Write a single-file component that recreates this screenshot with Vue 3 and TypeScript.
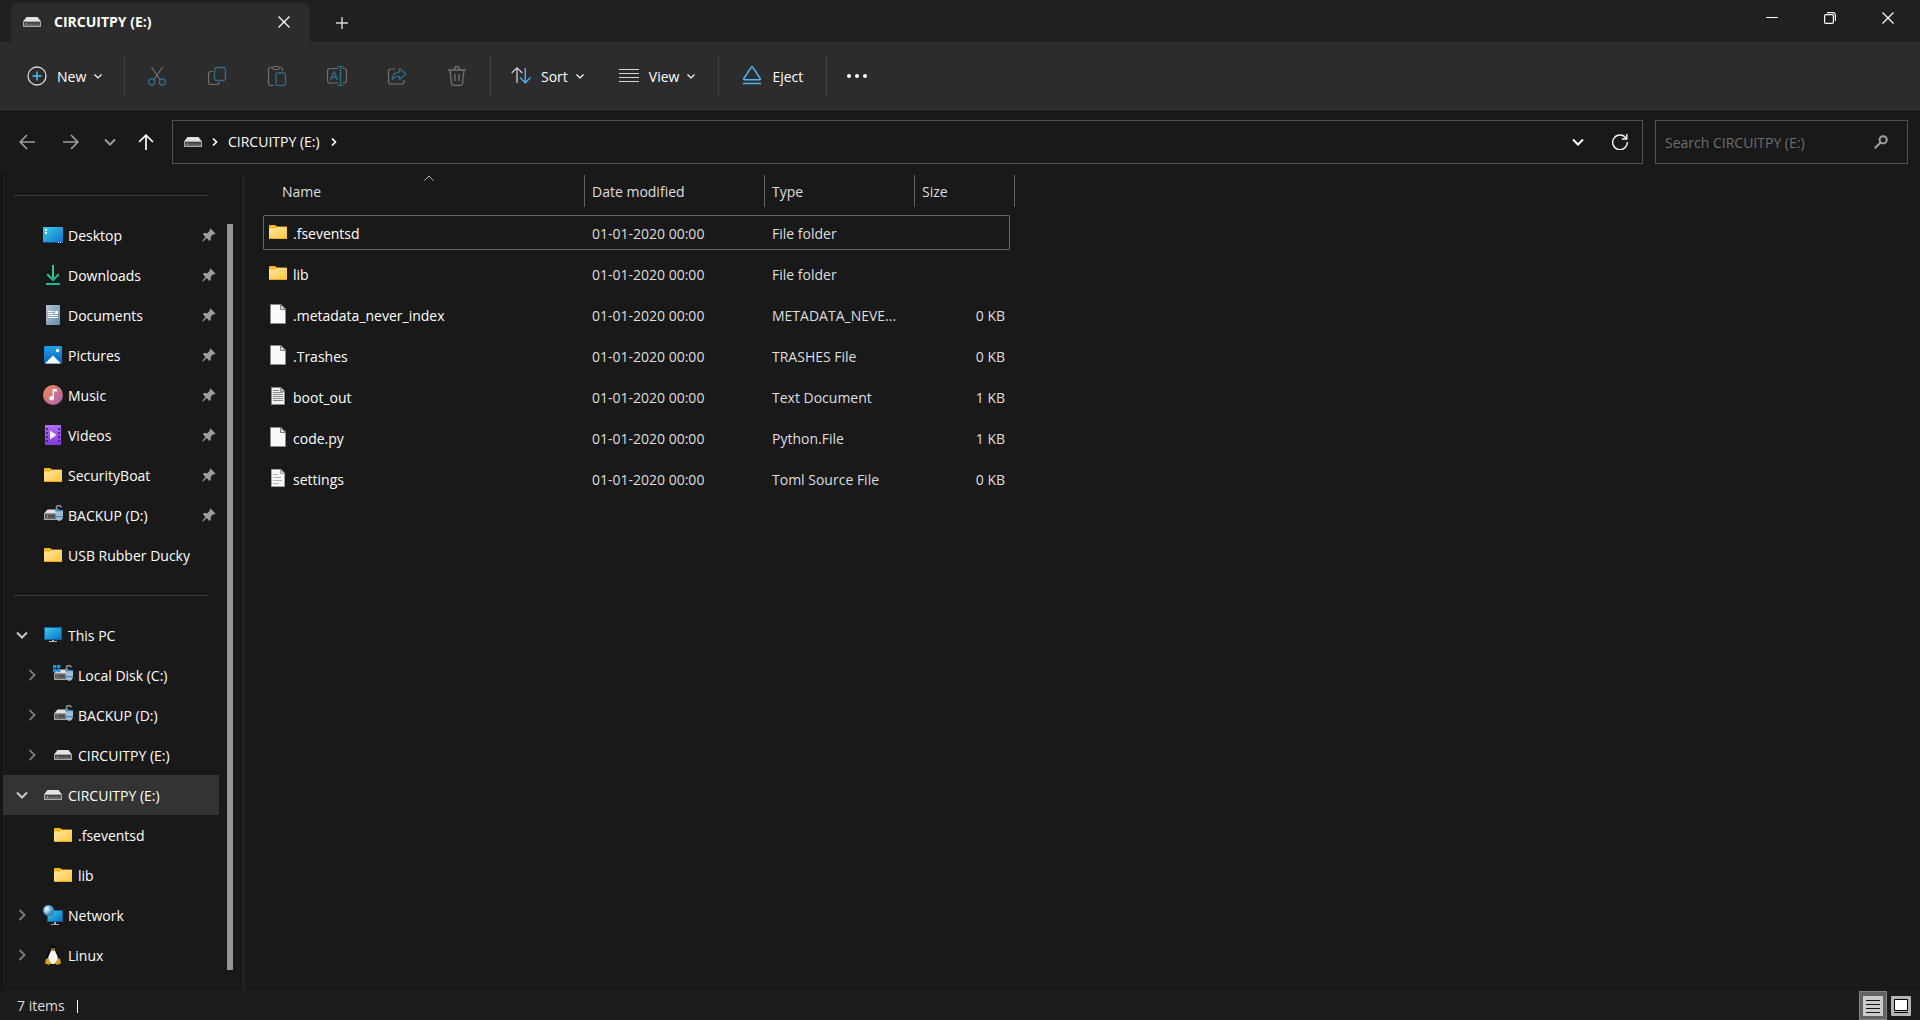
<script setup lang="ts">
import { ref } from 'vue'

interface TreeItem {
  label: string
  icon: string
  level: number
  pinned?: boolean
  expander?: 'open' | 'closed'
  selected?: boolean
}

interface FileRow {
  name: string
  icon: string
  modified: string
  type: string
  size: string
}

const quickAccess: TreeItem[] = [
  { label: 'Desktop', icon: 'desktop', level: 0, pinned: true },
  { label: 'Downloads', icon: 'downloads', level: 0, pinned: true },
  { label: 'Documents', icon: 'documents', level: 0, pinned: true },
  { label: 'Pictures', icon: 'pictures', level: 0, pinned: true },
  { label: 'Music', icon: 'music', level: 0, pinned: true },
  { label: 'Videos', icon: 'videos', level: 0, pinned: true },
  { label: 'SecurityBoat', icon: 'folder', level: 0, pinned: true },
  { label: 'BACKUP (D:)', icon: 'drive-lock', level: 0, pinned: true },
  { label: 'USB Rubber Ducky', icon: 'folder', level: 0 },
]

const devices: TreeItem[] = [
  { label: 'This PC', icon: 'pc', level: 0, expander: 'open' },
  { label: 'Local Disk (C:)', icon: 'drive-system', level: 1, expander: 'closed' },
  { label: 'BACKUP (D:)', icon: 'drive-lock', level: 1, expander: 'closed' },
  { label: 'CIRCUITPY (E:)', icon: 'drive', level: 1, expander: 'closed' },
  { label: 'CIRCUITPY (E:)', icon: 'drive', level: 0, expander: 'open', selected: true },
  { label: '.fseventsd', icon: 'folder', level: 1 },
  { label: 'lib', icon: 'folder', level: 1 },
  { label: 'Network', icon: 'network', level: 0, expander: 'closed' },
  { label: 'Linux', icon: 'linux', level: 0, expander: 'closed' },
]

const groups = [quickAccess, devices]

const fileActions = [
  { label: 'Cut', icon: 'cut' },
  { label: 'Copy', icon: 'copy' },
  { label: 'Paste', icon: 'paste' },
  { label: 'Rename', icon: 'rename' },
  { label: 'Share', icon: 'share' },
  { label: 'Delete', icon: 'trash' },
]

const stamp = '01-01-2020 00:00'
const files: FileRow[] = [
  { name: '.fseventsd', icon: 'folder', modified: stamp, type: 'File folder', size: '' },
  { name: 'lib', icon: 'folder', modified: stamp, type: 'File folder', size: '' },
  { name: '.metadata_never_index', icon: 'page', modified: stamp, type: 'METADATA_NEVE...', size: '0 KB' },
  { name: '.Trashes', icon: 'page', modified: stamp, type: 'TRASHES File', size: '0 KB' },
  { name: 'boot_out', icon: 'text', modified: stamp, type: 'Text Document', size: '1 KB' },
  { name: 'code.py', icon: 'page', modified: stamp, type: 'Python.File', size: '1 KB' },
  { name: 'settings', icon: 'toml', modified: stamp, type: 'Toml Source File', size: '0 KB' },
]

const focused = ref(0)
const query = ref('')
</script>

<template>
  <div class="explorer">
    <svg class="sprite" aria-hidden="true">
      <defs>
        <linearGradient id="g-blue" x1="0" y1="0" x2="1" y2="1">
          <stop offset="0" stop-color="#38cfe8" /><stop offset="1" stop-color="#0f6fc9" />
        </linearGradient>
        <linearGradient id="g-folder" x1="0" y1="0" x2="1" y2="1">
          <stop offset="0" stop-color="#ffe9a3" /><stop offset="1" stop-color="#fbc53a" />
        </linearGradient>
        <linearGradient id="g-down" x1="0" y1="0" x2="1" y2="1">
          <stop offset="0" stop-color="#30cc8c" /><stop offset="1" stop-color="#16a3a0" />
        </linearGradient>
        <linearGradient id="g-doc" x1="0" y1="0" x2="1" y2="1">
          <stop offset="0" stop-color="#b4c6da" /><stop offset="1" stop-color="#668aac" />
        </linearGradient>
        <linearGradient id="g-pic" x1="0" y1="0" x2="0" y2="1">
          <stop offset="0" stop-color="#1da0ea" /><stop offset="1" stop-color="#0a62b8" />
        </linearGradient>
        <linearGradient id="g-music" x1="0" y1="0" x2="1" y2="1">
          <stop offset="0" stop-color="#f58a52" /><stop offset="1" stop-color="#a763b4" />
        </linearGradient>
        <linearGradient id="g-video" x1="0" y1="0" x2="0" y2="1">
          <stop offset="0" stop-color="#b070f2" /><stop offset="1" stop-color="#8338dd" />
        </linearGradient>
        <radialGradient id="g-globe" cx="0.4" cy="0.35" r="0.7">
          <stop offset="0" stop-color="#cbe9f8" /><stop offset="0.5" stop-color="#5aa9d6" /><stop offset="1" stop-color="#2a6fa2" />
        </radialGradient>
        <linearGradient id="g-drive" x1="0" y1="0" x2="0" y2="1">
          <stop offset="0" stop-color="#3c3c3c" /><stop offset="1" stop-color="#707070" />
        </linearGradient>
      </defs>

      <symbol id="drive" viewBox="0 0 20 20">
        <path d="M4.500 5h11L19 9.500H1z" fill="#e2e2e4" />
        <path d="M1 9h18v6H1z" fill="#a9a9a9" />
        <path d="M2 10h16v4H2z" fill="url(#g-drive)" />
        <path d="M4 11h1v2H4z" fill="#35e04a" />
      </symbol>
      <symbol id="drive-lock" viewBox="0 0 20 20">
        <path d="M4.500 4.500h11L19 8.500H1z" fill="#e2e2e4" />
        <path d="M1 8.500h18V15H1z" fill="#a9a9a9" />
        <path d="M2 9.500h16V14H2z" fill="url(#g-drive)" />
        <path d="M4 10.500h1v2H4z" fill="#35e04a" />
        <path d="M13.500 5V2.500a2 2 0 0 1 2-2h.5a2 2 0 0 1 2 2" fill="none" stroke="#8d98a3" stroke-width="1.500" />
        <path d="M12.500 5H20v7.500q-1 3-3.750 3.500-2.750-.5-3.750-3.500z" fill="#a9bccb" />
        <path d="M12 5h8v1.300h-8zM12 11h8v1.300h-8z" fill="#2b8fdc" />
      </symbol>
      <symbol id="drive-system" viewBox="0 0 20 20">
        <use href="#drive-lock" />
        <path d="M0 0h3.300v3.300H0zM4 0h3.300v3.300H4zM0 4h3.300v3.300H0zM4 4h3.300v3.300H4z" fill="#1b95e8" />
      </symbol>
      <symbol id="folder" viewBox="0 0 20 20">
        <path d="M1 4q0-1 1-1h5l2 1.500h9q1 0 1 1V16H1z" fill="#f9b71c" />
        <path d="M1 6.500h6L9 5h10v11q0 1-1 1H2q-1 0-1-1z" fill="url(#g-folder)" />
        <path d="M1 16h18q0 1-1 1H2q-1 0-1-1z" fill="#eba92b" />
      </symbol>
      <symbol id="desktop" viewBox="0 0 20 20">
        <rect y="2" width="20" height="16" rx="1" fill="url(#g-blue)" />
        <path d="M0 17h20q0 1-1 1H1q-1 0-1-1z" fill="#0b4f8d" />
        <path d="M2 4h2v2H2zM2 7h2v2H2zM15 17h1v1h-1zM17 17h1v1h-1z" fill="#fff" />
      </symbol>
      <symbol id="downloads" viewBox="0 0 20 20">
        <path d="M9 0h2v13H9z" fill="#30cc8c" />
        <path d="M4.200 9.200 10 15l5.800-5.800" fill="none" stroke="url(#g-down)" stroke-width="2" />
        <path d="M3 18h14v2H3z" fill="url(#g-down)" />
      </symbol>
      <symbol id="documents" viewBox="0 0 20 20">
        <rect x="3" width="14" height="20" rx="1" fill="url(#g-doc)" />
        <path d="M5 6h6v1H5zM5 8h6v1H5zM5 10h10v1H5zM5 12h10v1H5zM12 6h3v3h-3z" fill="#fff" />
      </symbol>
      <symbol id="pictures" viewBox="0 0 20 20">
        <rect x="1" y="1" width="18" height="18" rx="1.500" fill="url(#g-pic)" />
        <path d="M2.500 18 10 10.500 17.500 18q-.5.500-1.500.5H4q-1 0-1.500-.5z" fill="#f3f8fd" />
        <circle cx="14.500" cy="5.500" r="1.700" fill="#fff" />
      </symbol>
      <symbol id="music" viewBox="0 0 20 20">
        <circle cx="10" cy="10" r="10" fill="url(#g-music)" />
        <circle cx="8.700" cy="13.200" r="2.300" fill="#fff" />
        <path d="M9.600 4h4.200v2.600h-2.800v6.600H9.600z" fill="#fff" />
      </symbol>
      <symbol id="videos" viewBox="0 0 20 20">
        <rect x="2" width="16" height="20" rx="1" fill="url(#g-video)" />
        <path d="M3 3h2v2H3zM3 7h2v2H3zM3 11h2v2H3zM3 15h2v2H3zM15 3h2v2h-2zM15 7h2v2h-2zM15 11h2v2h-2zM15 15h2v2h-2z" fill="#4b2284" />
        <path d="M7 5.500v9l6.500-4.500z" fill="#f5effc" />
      </symbol>
      <symbol id="pc" viewBox="0 0 20 20">
        <rect x="1" y="2" width="18" height="13" fill="#15609a" />
        <rect x="2" y="3" width="16" height="11" fill="url(#g-blue)" />
        <path d="M9 15h2v1h3v1H6v-1h3z" fill="#b0b8be" />
      </symbol>
      <symbol id="network" viewBox="0 0 20 20">
        <rect x="4" y="5" width="16" height="12" rx=".5" fill="#15609a" />
        <rect x="5" y="6" width="14" height="10" fill="url(#g-blue)" />
        <path d="M11 17h2v2h3v1H8v-1h3z" fill="#a5adb3" />
        <circle cx="5.500" cy="5.500" r="5.500" fill="url(#g-globe)" />
        <path d="M2 2.500q3-1.500 4 .5T4.500 6 6 9q-3 0-4.500-3z" fill="#e8f5fb" fill-opacity=".7" />
      </symbol>
      <symbol id="linux" viewBox="0 0 20 20">
        <path d="M10 0c2.200 0 3 1.500 3 3.500 0 2 3.500 5 4 9.500l-3 6H6l-3-6c.5-4.500 4-7.500 4-9.500C7 1.500 7.800 0 10 0z" fill="#0a0a0a" />
        <path d="M8 5.500q2-1 4 0c.5 2.500 2.800 4.500 2.800 8 0 3-2 5.500-4.800 5.500s-4.800-2.500-4.800-5.500c0-3.500 2.300-5.500 2.800-8z" fill="#fafafa" />
        <path d="M8 4.500h4L10 7z" fill="#e8a50c" />
        <path d="M8.300 3h1v1.200h-1zM10.700 3h1v1.200h-1z" fill="#ddd" />
        <path d="M4.500 13 8 18q-.5 2-2.500 1.800L2 18.500 3 14zM15.500 13 12 18q.5 2 2.500 1.800l3.500-1.300-1-4.500z" fill="#d9a014" />
      </symbol>
      <symbol id="page" viewBox="0 0 20 20">
        <path d="M2.500.500H13l4.500 4.500v14.500h-15z" fill="#fafafa" stroke="#8a8a8a" />
        <path d="M12.500.500V5.500h5z" fill="#dedede" stroke="#7c7c7c" />
      </symbol>
      <symbol id="text" viewBox="0 0 20 20">
        <path d="M3.500 1.500h9.500l3.500 3.500v13.500h-13z" fill="#f2f2f2" stroke="#8a8a8a" />
        <path d="M5 4h6v1H5zM5 6h10v1H5zM5 8h10v1H5zM5 10h10v1H5zM5 12h10v1H5zM5 14h10v1H5z" fill="#8c8c8c" />
        <path d="M12.500 1.500v4h4z" fill="#d5d5d5" stroke="#8a8a8a" />
      </symbol>
      <symbol id="toml" viewBox="0 0 20 20">
        <path d="M3.500 1.500h9.500l3.500 3.500v13.500h-13z" fill="#f7f7f7" stroke="#a5a5a5" />
        <path d="M5 6h5v1H5zM5 9h8v1H5zM5 12h9v1H5zM5 15h6v1H5z" fill="#b4b4b4" />
        <path d="M12.500 1.500v4h4z" fill="#e5e5e5" stroke="#9a9a9a" />
      </symbol>

      <symbol id="cut" viewBox="0 0 20 20">
        <path d="M4.500 1 12.800 13.500M15.500 1 7.200 13.500" fill="none" stroke="#717171" stroke-width="1.200" />
        <g fill="none" stroke="#316a8b" stroke-width="1.400"><circle cx="4.700" cy="16" r="3" /><circle cx="15.300" cy="16" r="3" /></g>
      </symbol>
      <symbol id="copy" viewBox="0 0 20 20">
        <path d="M5.500 5.500H4A2.500 2.500 0 0 0 1.500 8v8A2.500 2.500 0 0 0 4 18.500h5.500a2.500 2.500 0 0 0 2.500-2.500" fill="none" stroke="#717171" stroke-width="1.200" />
        <rect x="7.500" y="1.500" width="11" height="13" rx="2.500" fill="none" stroke="#316a8b" stroke-width="1.300" />
      </symbol>
      <symbol id="paste" viewBox="0 0 20 20">
        <path d="M6.500 19.500h-3a2 2 0 0 1-2-2v-14a2 2 0 0 1 2-2H6M12 1.500h1.500a2 2 0 0 1 2 2V5" fill="none" stroke="#717171" stroke-width="1.200" />
        <rect x="5.500" y=".5" width="7" height="3" rx="1.500" fill="none" stroke="#717171" />
        <rect x="9" y="7" width="9.500" height="12.500" rx="1.500" fill="none" stroke="#316a8b" stroke-width="1.300" />
      </symbol>
      <symbol id="rename" viewBox="0 0 20 20">
        <path d="M11 2.500H3A2.500 2.500 0 0 0 .5 5v9.500A2.500 2.500 0 0 0 3 17h8M15.500 2.500H17A2.500 2.500 0 0 1 19.500 5v9.500A2.500 2.500 0 0 1 17 17h-1.500" fill="none" stroke="#717171" stroke-width="1.200" />
        <path d="M3.500 14 7 5.500l3.500 8.500M4.700 11.200h4.600M10.500.5h6M10.500 19.500h6M13.500.5v19" fill="none" stroke="#316a8b" stroke-width="1.400" />
      </symbol>
      <symbol id="share" viewBox="0 0 20 20">
        <path d="M8 3H4a2.500 2.500 0 0 0-2.500 2.500v10A2.500 2.500 0 0 0 4 18h10.500a2.500 2.500 0 0 0 2.500-2.500V14" fill="none" stroke="#717171" stroke-width="1.200" />
        <path d="M12.500 2.500 19 8l-6.500 5.500v-3.200c-3.500 0-5.500 1-7.500 3.200.5-4.500 3-7.300 7.500-7.700z" fill="none" stroke="#316a8b" stroke-width="1.300" stroke-linejoin="round" />
      </symbol>
      <symbol id="trash" viewBox="0 0 20 20">
        <path d="M1 4h18M7.500 4V3a2.500 2.500 0 0 1 5 0v1M3 4l1.500 13.500a2 2 0 0 0 2 1.800h7a2 2 0 0 0 2-1.800L17 4M8 8v7M12 8v7" fill="none" stroke="#717171" stroke-width="1.300" />
      </symbol>

      <symbol id="down" viewBox="0 0 12 12"><path d="m1 3.500 5 5 5-5" fill="none" stroke="currentColor" stroke-width="2" /></symbol>
      <symbol id="down-thin" viewBox="0 0 8 8"><path d="m.5 2.500 3.500 3.500 3.500-3.500" fill="none" stroke="currentColor" stroke-width="1.200" /></symbol>
      <symbol id="right" viewBox="0 0 12 12"><path d="m3.500 1 5 5-5 5" fill="none" stroke="currentColor" stroke-width="2" /></symbol>
      <symbol id="pin" viewBox="0 0 14 14">
        <path d="M8.500.5 13.500 5.500 12 6.500 11 6.300 8.700 8.700l.2 3L7.500 13 4.600 10.100 1.200 13.500.3 12.800 3.500 9 .8 6.300 2.200 5l3 .2L7.700 2.900 7.500 1.800z" fill="#98a0a6" />
      </symbol>
      <symbol id="close" viewBox="0 0 12 12"><path d="m.5.500 11 11M11.500.500l-11 11" fill="none" stroke="currentColor" stroke-width="1.300" /></symbol>
    </svg>

    <header class="titlebar">
      <div class="tab">
        <svg class="icon"><use href="#drive" /></svg>
        <span class="tab-title">CIRCUITPY (E:)</span>
        <button class="plain" type="button" aria-label="Close tab"><svg class="glyph"><use href="#close" /></svg></button>
      </div>
      <button class="plain add-tab" type="button" aria-label="New tab">
        <svg class="glyph" viewBox="0 0 12 12"><path d="M6 0v12M0 6h12" stroke="#d8d8d8" stroke-width="1.400" /></svg>
      </button>
      <div class="window-controls">
        <button class="plain" type="button" aria-label="Minimize">
          <svg class="glyph" viewBox="0 0 12 12"><path d="M0 5h12v1H0z" fill="#fff" /></svg>
        </button>
        <button class="plain" type="button" aria-label="Restore">
          <svg class="glyph" viewBox="0 0 12 12">
            <rect x=".6" y="2.600" width="8.800" height="8.800" rx="1.200" fill="none" stroke="#fff" stroke-width="1.200" />
            <path d="M3 .6h6a2.400 2.400 0 0 1 2.400 2.400v6" fill="none" stroke="#fff" stroke-width="1.200" />
          </svg>
        </button>
        <button class="plain" type="button" aria-label="Close"><svg class="glyph"><use href="#close" /></svg></button>
      </div>
    </header>

    <div class="toolbar" role="toolbar" aria-label="Commands">
      <div class="tool-group group-new">
        <button class="command" type="button">
          <svg class="icon" viewBox="0 0 20 20">
            <circle cx="10" cy="10" r="9" fill="none" stroke="#d9d9d9" stroke-width="1.300" />
            <path d="M10 5.500v9M5.500 10h9" stroke="#4cc2ff" stroke-width="1.400" />
          </svg>
          <span class="label">New</span>
          <svg class="caret"><use href="#down-thin" /></svg>
        </button>
      </div>
      <div class="tool-group group-actions">
        <button v-for="a in fileActions" :key="a.icon" class="plain" type="button" :aria-label="a.label" disabled>
          <svg class="icon"><use :href="`#${a.icon}`" /></svg>
        </button>
      </div>
      <div class="tool-group group-view">
        <button class="command" type="button">
          <svg class="icon" viewBox="0 0 20 20">
            <path d="M.7 7 6 1.800 11.300 7M6 2v15" fill="none" stroke="#cfcfcf" stroke-width="1.300" />
            <path d="M9 11.500l5.300 5.200 5.300-5.200M14.300 16.500V2" fill="none" stroke="#4cb4ee" stroke-width="1.400" />
          </svg>
          <span class="label">Sort</span>
          <svg class="caret"><use href="#down-thin" /></svg>
        </button>
        <button class="command" type="button">
          <svg class="icon" viewBox="0 0 20 20"><path d="M0 3h20v1H0zM0 7h20v1H0zM0 11h20v1H0zM0 15h20v1H0z" fill="#d5d5d5" /></svg>
          <span class="label">View</span>
          <svg class="caret"><use href="#down-thin" /></svg>
        </button>
      </div>
      <div class="tool-group group-eject">
        <button class="command" type="button">
          <svg class="icon" viewBox="0 0 20 20">
            <path d="M9.300 1.200q.7-.9 1.400 0l7.500 11.300q.5 1.200-.8 1.300H2.600q-1.300-.1-.8-1.300zM1 17.500h18" fill="none" stroke="#4cb4ee" stroke-width="1.500" stroke-linejoin="round" />
          </svg>
          <span class="label">Eject</span>
        </button>
      </div>
      <button class="plain more" type="button" aria-label="See more">
        <svg class="icon" viewBox="0 0 20 20"><g fill="#fff"><circle cx="2" cy="10" r="2" /><circle cx="10" cy="10" r="2" /><circle cx="18" cy="10" r="2" /></g></svg>
      </button>
    </div>

    <div class="navbar">
      <div class="history">
        <button class="plain" type="button" aria-label="Back">
          <svg class="arrow" viewBox="0 0 16 16"><path d="M8 1 1.200 8 8 15M1.200 8H16" fill="none" stroke="#9d9d9d" stroke-width="1.700" /></svg>
        </button>
        <button class="plain" type="button" aria-label="Forward">
          <svg class="arrow" viewBox="0 0 16 16"><path d="m8 1 6.800 7L8 15M14.800 8H0" fill="none" stroke="#9d9d9d" stroke-width="1.700" /></svg>
        </button>
        <button class="plain recent" type="button" aria-label="Recent locations"><svg class="glyph"><use href="#down" /></svg></button>
        <button class="plain" type="button" aria-label="Up">
          <svg class="arrow" viewBox="0 0 16 16"><path d="M1 8 8 1.200 15 8M8 1.200V16" fill="none" stroke="#fff" stroke-width="1.700" /></svg>
        </button>
      </div>
      <nav class="address" aria-label="Address">
        <svg class="icon"><use href="#drive" /></svg>
        <svg class="crumb-sep" viewBox="0 0 8 8"><path d="m2 .5 3.500 3.500L2 7.500" fill="none" stroke="#fff" stroke-width="1.600" /></svg>
        <a class="crumb" href="#">CIRCUITPY (E:)</a>
        <svg class="crumb-sep" viewBox="0 0 8 8"><path d="m2 .5 3.500 3.500L2 7.500" fill="none" stroke="#fff" stroke-width="1.600" /></svg>
        <button class="plain previous" type="button" aria-label="Previous locations"><svg class="glyph"><use href="#down" /></svg></button>
        <button class="plain" type="button" aria-label="Refresh">
          <svg class="arrow" viewBox="0 0 16 16"><path d="M14 4.200A7.300 7.300 0 1 0 15.300 8M14.800 0v5H9.800" fill="none" stroke="#f2f2f2" stroke-width="1.400" /></svg>
        </button>
      </nav>
      <label class="search">
        <input v-model="query" type="text" placeholder="Search CIRCUITPY (E:)" aria-label="Search CIRCUITPY (E:)" />
        <svg class="lens" viewBox="0 0 14 14"><circle cx="9.200" cy="4.800" r="3.600" fill="none" stroke="#a0a0a0" stroke-width="2" /><path d="M6.500 7.500.8 13.200" stroke="#a0a0a0" stroke-width="2" /></svg>
      </label>
    </div>

    <div class="body">
      <aside class="sidebar">
        <nav class="tree" aria-label="Folders">
          <ul v-for="(group, g) in groups" :key="g">
            <li class="rule" role="separator"></li>
            <li v-for="item in group" :key="item.label + item.level" class="node" :class="{ nested: item.level === 1, selected: item.selected }">
              <button v-if="item.expander" class="plain expander" :class="item.expander" type="button" :aria-label="`Toggle ${item.label}`">
                <svg class="glyph"><use :href="item.expander === 'open' ? '#down' : '#right'" /></svg>
              </button>
              <span v-else class="expander"></span>
              <a href="#">
                <svg class="icon"><use :href="`#${item.icon}`" /></svg>
                <span class="label">{{ item.label }}</span>
              </a>
              <svg v-if="item.pinned" class="pin"><use href="#pin" /></svg>
            </li>
          </ul>
        </nav>
        <div class="scroll-track"><div class="scroll-thumb"></div></div>
      </aside>

      <main class="content">
        <table>
          <colgroup>
            <col class="col-name" />
            <col class="col-date" />
            <col class="col-type" />
            <col class="col-size" />
          </colgroup>
          <thead>
            <tr>
              <th class="name" aria-sort="ascending">
                <button type="button">Name</button>
                <svg class="sort-mark" viewBox="0 0 10 6"><path d="m.5 5.500 4.500-4.500 4.500 4.500" fill="none" stroke="#b5b5b5" /></svg>
              </th>
              <th><button type="button">Date modified</button></th>
              <th><button type="button">Type</button></th>
              <th><button type="button">Size</button></th>
            </tr>
          </thead>
          <tbody>
            <tr v-for="(file, i) in files" :key="file.name" :class="{ focused: i === focused }" @click="focused = i">
              <td class="name">
                <span class="file">
                  <svg class="icon"><use :href="`#${file.icon}`" /></svg>
                  <span class="label">{{ file.name }}</span>
                </span>
              </td>
              <td>{{ file.modified }}</td>
              <td>{{ file.type }}</td>
              <td class="size">{{ file.size }}</td>
            </tr>
          </tbody>
        </table>
      </main>
    </div>

    <footer class="status">
      <span class="count">7 items</span>
      <div class="view-modes">
        <button class="plain mode active" type="button" aria-label="Details view">
          <svg class="icon" viewBox="0 0 20 20"><rect width="20" height="20" rx="1" fill="#cbcbcb" /><path d="M3 4h14v1H3zM3 8h14v1H3zM3 12h14v1H3zM3 16h14v1H3z" fill="#111" /></svg>
        </button>
        <button class="plain mode" type="button" aria-label="Large icons view">
          <svg class="icon" viewBox="0 0 20 20"><rect width="20" height="20" rx="1" fill="#b4b4b4" /><path d="M3.500 3.500h13v11h-13z" fill="#fff" stroke="#000" /><path d="M3 16h14v1H3z" fill="#000" /></svg>
        </button>
      </div>
    </footer>
  </div>
</template>

<style>
body {
  margin: 0;
  background: #191919;
}
</style>

<style scoped>
.explorer {
  display: flex;
  flex-direction: column;
  min-height: 100vh;
  background: #191919;
  color: #fff;
  font: 14px/20px "Open Sans", "Noto Sans", sans-serif;
}

.sprite {
  position: absolute;
  width: 0;
  height: 0;
}

button,
input {
  font: inherit;
  color: inherit;
}

button {
  padding: 0;
  border: 0;
  background: none;
}

a {
  color: inherit;
  text-decoration: none;
}

.plain {
  display: flex;
  align-items: center;
  justify-content: center;
}

.label {
  padding-top: 2px;
}

.icon {
  flex: none;
  width: 20px;
  height: 20px;
}

.glyph {
  width: 12px;
  height: 12px;
}

.arrow {
  width: 16px;
  height: 16px;
}

.caret {
  width: 8px;
  height: 8px;
  margin-left: 8px;
}

.titlebar {
  display: flex;
  align-items: flex-end;
  height: 42px;
  background: #202020;
}

.tab {
  display: flex;
  align-items: center;
  box-sizing: border-box;
  width: 299px;
  height: 39px;
  margin-left: 11px;
  padding: 0 20px 1px 11px;
  border-radius: 8px 8px 0 0;
  background: #2c2c2c;
}

.tab-title {
  flex: 1;
  margin-left: 12px;
  font-weight: 700;
}

.add-tab {
  width: 32px;
  height: 38px;
  margin-left: 16px;
}

.window-controls {
  display: flex;
  align-self: flex-start;
  margin-left: auto;
  margin-right: 3px;
}

.window-controls .plain {
  width: 58px;
  height: 36px;
}

.toolbar {
  display: flex;
  align-items: center;
  height: 67px;
  background: #2c2c2c;
  border-bottom: 1px solid #3b3b3b;
}

.tool-group {
  display: flex;
  align-items: center;
  box-sizing: border-box;
  height: 40px;
  border-right: 1px solid #414141;
}

.group-new {
  width: 125px;
  padding-left: 27px;
}

.group-actions {
  gap: 40px;
  padding: 0 23px 0 22px;
}

.group-view {
  gap: 35px;
  padding: 0 23px 0 20px;
}

.group-eject {
  padding: 0 23px;
}

.command {
  display: flex;
  align-items: center;
}

.command .label {
  margin-left: 10px;
}

.more {
  margin-left: 20px;
}

.navbar {
  display: flex;
  padding: 10px 12px 11px 0;
}

.history {
  display: flex;
  align-items: center;
  box-sizing: border-box;
  width: 172px;
  padding-left: 19px;
  gap: 28px;
}

.recent {
  margin: 0 -6px 0 -3px;
  color: #9d9d9d;
}

.address,
.search {
  display: flex;
  align-items: center;
  box-sizing: border-box;
  height: 44px;
  border: 1px solid #535353;
}

.address {
  flex: 1;
  padding: 0 14px 0 10px;
}

.crumb {
  margin: 0 2px 0 1px;
}

.crumb-sep {
  width: 8px;
  height: 8px;
  margin: 0 8px;
}

.previous {
  margin-left: auto;
  margin-right: 28px;
}

.search {
  width: 253px;
  margin-left: 12px;
  padding: 0 19px 0 9px;
}

.search input {
  flex: 1;
  min-width: 0;
  padding: 2px 0 0;
  border: 0;
  outline: 0;
  background: none;
}

.search input::placeholder {
  color: #6d6d6d;
  opacity: 1;
}

.lens {
  width: 14px;
  height: 14px;
}

.body {
  display: flex;
  flex: 1;
}

.sidebar {
  display: flex;
  box-sizing: border-box;
  width: 245px;
  border-left: 3px solid #151515;
  border-right: 3px solid #222;
}

.tree {
  flex: 1;
  padding-bottom: 16px;
}

.tree ul {
  margin: 0;
  padding: 0;
  list-style: none;
}

.rule {
  height: 1px;
  margin: 20px 10px 19px;
  background: #3a3a3a;
}

.node {
  display: flex;
  align-items: center;
  box-sizing: border-box;
  height: 40px;
  padding: 0 3px 0 8px;
}

.node.nested {
  padding-left: 18px;
}

.node.selected {
  background: #333;
}

.expander {
  width: 22px;
  height: 24px;
  margin-right: 10px;
  color: #777;
}

.expander.open {
  color: #c8c8c8;
}

.node a {
  display: flex;
  align-items: center;
  flex: 1;
  gap: 5px;
  white-space: nowrap;
}

.pin {
  width: 14px;
  height: 14px;
}

.scroll-track {
  display: flex;
  width: 23px;
}

.scroll-thumb {
  width: 6px;
  margin: 49px 9px 21px 8px;
  background: #959595;
}

.content {
  flex: 1;
  padding-left: 18px;
}

table {
  width: 752px;
  table-layout: fixed;
  border-collapse: collapse;
}

.col-name {
  width: 322px;
}

.col-date {
  width: 180px;
}

.col-type {
  width: 150px;
}

.col-size {
  width: 100px;
}

th {
  position: relative;
  height: 37px;
  padding: 0;
  font-weight: 400;
  vertical-align: top;
}

th button {
  width: 100%;
  height: 32px;
  padding: 2px 0 0 7px;
  border-right: 1px solid #636363;
  color: #dedede;
  text-align: left;
}

th.name button {
  padding-left: 19px;
}

.sort-mark {
  position: absolute;
  top: 0;
  left: 50%;
  width: 10px;
  height: 6px;
}

tbody tr {
  position: relative;
}

tbody tr.focused::after {
  content: "";
  position: absolute;
  inset: 3px 5px 3px 0;
  border: 1px solid #666;
  border-radius: 1px;
}

td {
  box-sizing: border-box;
  height: 41px;
  padding: 2px 14px 0 7px;
  color: #dedede;
  white-space: nowrap;
}

td.name {
  padding-top: 0;
  padding-left: 5px;
  color: #fff;
}

td.size {
  padding-right: 10px;
  text-align: right;
}

.file {
  display: flex;
  align-items: flex-start;
  gap: 5px;
}

.status {
  display: flex;
  align-items: center;
  height: 29px;
  background: #1c1c1c;
  color: #dedede;
}

.count {
  padding-left: 17px;
}

.count::after {
  content: "";
  display: inline-block;
  width: 1px;
  height: 13px;
  margin-left: 12px;
  background: #fff;
  vertical-align: -2px;
}

.view-modes {
  display: flex;
  margin-left: auto;
  margin-right: 5px;
}

.mode {
  box-sizing: border-box;
  width: 28px;
  height: 29px;
}

.mode.active {
  border: 1px solid #838383;
  background: #636363;
}
</style>
